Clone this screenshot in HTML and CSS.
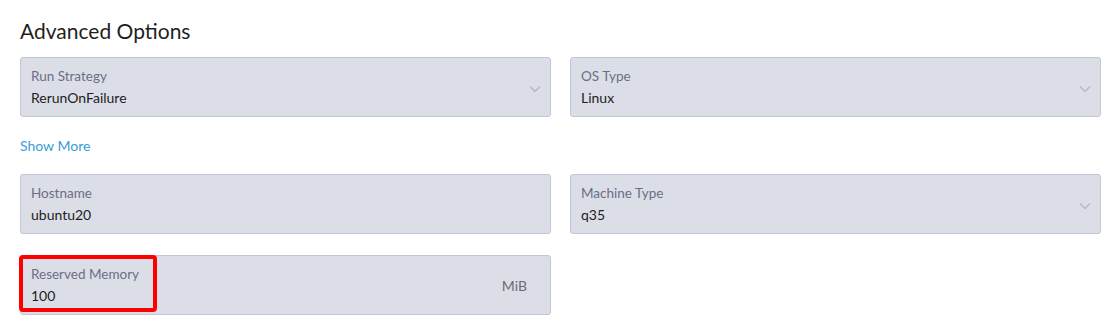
FILE: index.html
```html
<!DOCTYPE html>
<html lang="en">
<head>
    <meta charset="UTF-8">
    <title>Advanced Options</title>
    <link rel="stylesheet" href="styles.css">
</head>
<body>
    <div class="page">
        <h2 class="title">Advanced Options</h2>

        <div class="grid">
            <div class="field select">
                <span class="label">Run Strategy</span>
                <span class="value">RerunOnFailure</span>
                <svg class="chevron" width="12" height="8" viewBox="0 0 12 8"><path d="M1 1.5l5 5 5-5" fill="none" stroke="#b4b7c6" stroke-width="1.4"/></svg>
            </div>
            <div class="field select">
                <span class="label">OS Type</span>
                <span class="value">Linux</span>
                <svg class="chevron" width="12" height="8" viewBox="0 0 12 8"><path d="M1 1.5l5 5 5-5" fill="none" stroke="#b4b7c6" stroke-width="1.4"/></svg>
            </div>
        </div>

        <a href="#" class="show-more">Show More</a>

        <div class="grid">
            <div class="field">
                <span class="label">Hostname</span>
                <span class="value">ubuntu20</span>
            </div>
            <div class="field select">
                <span class="label">Machine Type</span>
                <span class="value">q35</span>
                <svg class="chevron" width="12" height="8" viewBox="0 0 12 8"><path d="M1 1.5l5 5 5-5" fill="none" stroke="#b4b7c6" stroke-width="1.4"/></svg>
            </div>
            <div class="field">
                <span class="label">Reserved Memory</span>
                <span class="value">100</span>
                <span class="suffix">MiB</span>
                <div class="highlight"></div>
            </div>
        </div>
    </div>
</body>
</html>
```

FILE: styles.css
```css
* { margin: 0; padding: 0; box-sizing: border-box; }
body { font-family: Lato, "Open Sans", sans-serif; background: #fff; color: #222; }
.page {
    padding: 18px 0 0 20px;
    width: 1101px;
}
.title {
    font-size: 21px;
    font-weight: 400;
    color: #1f1f22;
    line-height: 26px;
    margin-bottom: 13px;
}
.grid {
    display: grid;
    grid-template-columns: 531px 531px;
    column-gap: 19px;
    row-gap: 21px;
}
.field {
    position: relative;
    height: 60px;
    background-color: #dcdee7;
    border: 1px solid #c3c6d4;
    border-radius: 3px;
    padding: 10px 10px 0 10px;
    display: flex;
    flex-direction: column;
}
.label {
    font-size: 13.5px;
    color: #6b6e86;
    line-height: 17px;
}
.value {
    font-size: 14px;
    color: #222;
    line-height: 20px;
    margin-top: 3px;
}
.chevron {
    position: absolute;
    right: 9px;
    top: 27px;
}
.suffix {
    position: absolute;
    right: 23px;
    top: 21px;
    font-size: 14px;
    color: #6e6a70;
}
.highlight {
    position: absolute;
    left: -2px;
    top: -1px;
    width: 138px;
    height: 57px;
    border: 4px solid #ff0000;
    border-radius: 4px;
}
.show-more {
    display: block;
    font-size: 14px;
    color: #3a9bd8;
    text-decoration: none;
    line-height: 18px;
    margin: 20px 0 19px 0;
}
```
